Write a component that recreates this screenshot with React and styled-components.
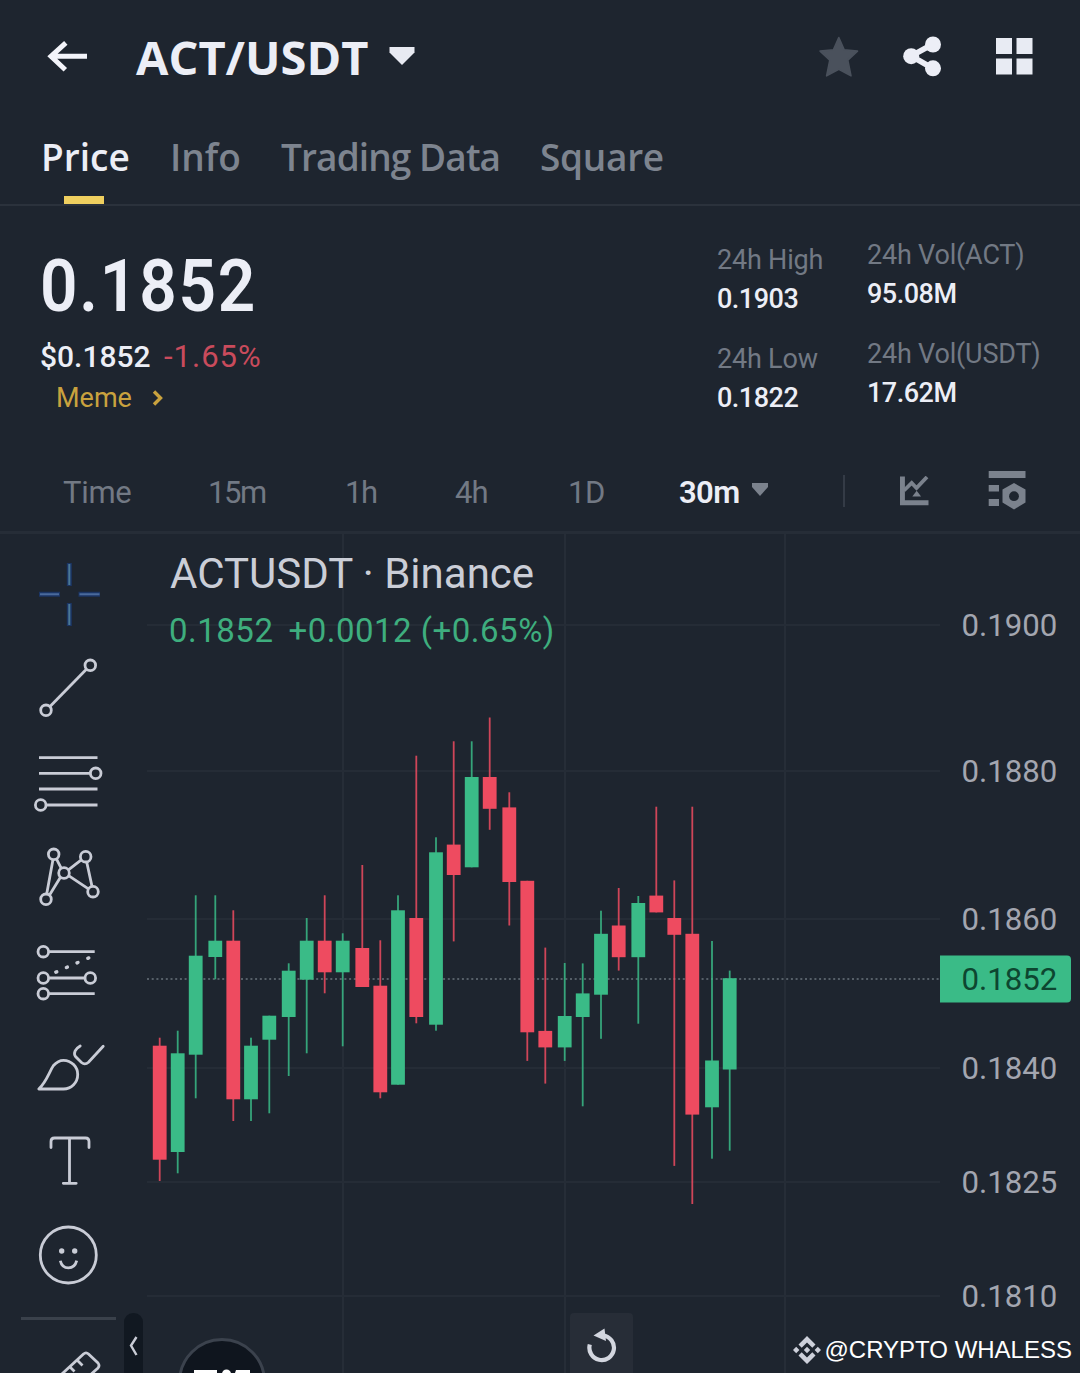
import React from 'react';
import styled, { createGlobalStyle } from 'styled-components';

const UP = '#3abb87';
const DOWN = '#ee4b60';

const TABS = [
  { label: 'Price', width: 129, active: true },
  { label: 'Info', width: 111 },
  { label: 'Trading Data', width: 259, spacing: -0.9 },
  { label: 'Square', width: 130, spacing: -0.3 },
];

const STATS = [
  [
    { label: '24h High', value: '0.1903' },
    { label: '24h Low', value: '0.1822' },
  ],
  [
    { label: '24h Vol(ACT)', value: '95.08M' },
    { label: '24h Vol(USDT)', value: '17.62M' },
  ],
];

const INTERVALS = [
  { label: 'Time', width: 145, spacing: -0.3 },
  { label: '15m', width: 137, spacing: -1.4 },
  { label: '1h', width: 110, spacing: -1.5 },
  { label: '4h', width: 113, spacing: -1 },
  { label: '1D', width: 111, spacing: -0.5 },
];

const GRID_X = [343, 565, 785];

const LEVELS = [
  { price: '0.1900', y: 625 },
  { price: '0.1880', y: 771 },
  { price: '0.1860', y: 919 },
  { price: '0.1840', y: 1068 },
  { price: '0.1825', y: 1182 },
  { price: '0.1810', y: 1296 },
];

// [x, body top, body bottom, wick top, wick bottom, is up]
const CANDLES = [
  [159.7, 1045.7, 1159.7, 1037.7, 1181, 0],
  [177.7, 1053.3, 1152, 1030.7, 1173.3, 1],
  [195.7, 955.7, 1054.7, 895.3, 1098.3, 1],
  [215.3, 940.7, 957, 895.3, 979.3, 1],
  [233.3, 940.7, 1099.3, 910.3, 1121, 0],
  [251, 1045.7, 1099.3, 1037.7, 1121, 1],
  [269.3, 1015.7, 1039.7, 1015.7, 1113.3, 1],
  [288.7, 970.7, 1017, 963.3, 1076, 1],
  [306.7, 940.7, 979.7, 918, 1053.3, 1],
  [324.7, 940.7, 972.3, 895.3, 993.3, 0],
  [342.7, 940.7, 972.3, 933.3, 1046.3, 1],
  [362.3, 948, 987, 865, 987, 0],
  [380.3, 985.7, 1092.3, 940.3, 1098.3, 0],
  [398, 910.3, 1084.7, 895.3, 1084.7, 1],
  [416.3, 918, 1017, 755.7, 1023.3, 0],
  [436, 852.3, 1024.7, 837.3, 1030.7, 1],
  [453.7, 844.6, 875, 741.3, 941.4, 0],
  [471.7, 777, 867.3, 741.3, 867.3, 1],
  [489.7, 777, 808.8, 717.5, 829.8, 0],
  [509.3, 807.4, 882, 792.3, 925.5, 0],
  [527.3, 880.8, 1032.3, 880.8, 1060.9, 0],
  [545.3, 1030.9, 1047.4, 947.6, 1083.6, 0],
  [564.7, 1016, 1047.4, 963, 1060.9, 1],
  [582.7, 993.4, 1017, 963.4, 1106.3, 1],
  [601, 933.8, 994.7, 910.7, 1038.8, 1],
  [618.7, 925.5, 957.2, 888, 970.6, 0],
  [638.3, 903, 957.2, 896, 1023.7, 1],
  [656.3, 895.6, 912.4, 806.7, 912.4, 0],
  [674.3, 918, 934.8, 880.4, 1165.9, 0],
  [692.3, 933.8, 1114.6, 806.7, 1204, 0],
  [712, 1060.5, 1107.3, 941, 1158.7, 1],
  [729.7, 978.2, 1069.5, 970.6, 1150.7, 1],
];

const TOOLS = [
  {
    name: 'cross',
    icon: (
      <>
        <path
          d="M69.3 16v23M69.3 56v23M39 47.3h21M78.5 47.3h21.5"
          stroke="#1b3564"
          strokeWidth="5"
        />
        <path d="M69.3 17v21M69.3 57v21" stroke="#4a7896" strokeWidth="2" />
        <path
          d="M40 47.3h19M79.5 47.3h20"
          stroke="#4a6a9c"
          strokeWidth="2"
        />
      </>
    ),
  },
  {
    name: 'trend line',
    icon: (
      <>
        <path d="M50 65.4 86.4 28.3" />
        <circle cx="90.3" cy="24.3" r="5.3" />
        <circle cx="46" cy="69.3" r="5.3" />
      </>
    ),
  },
  {
    name: 'fib retracement',
    icon: (
      <>
        <path d="M39 22.7h58.5M39 38.3h51.4M39 54h58.5M46 70h51.5" />
        <circle cx="95.7" cy="38.3" r="5.3" />
        <circle cx="40.7" cy="70" r="5.3" />
      </>
    ),
  },
  {
    name: 'pattern',
    icon: (
      <>
        <path d="M53 30.6 46.7 65M56.4 29.9l4.9 9.5M68.4 40.8l12.9-9.9M86.7 33l5.3 24.4M68.6 46.7l19.8 13.2M60.6 48.1 49.4 66.2" />
        <circle cx="53.7" cy="25.3" r="5.3" />
        <circle cx="85.7" cy="27.7" r="5.3" />
        <circle cx="64" cy="44" r="5.3" />
        <circle cx="93" cy="62.7" r="5.3" />
        <circle cx="46" cy="70.3" r="5.3" />
      </>
    ),
  },
  {
    name: 'forecast',
    icon: (
      <>
        <path d="M48.6 28.7h46.1M48.6 55H85M48.6 70.7h46.1" />
        <path
          d="m55.8 49.2 1-.4M66.4 44.5l1-.4M77 39.9l1-.4M87.8 35.3l1-.4"
          strokeWidth="3.4"
          strokeLinecap="round"
        />
        <circle cx="43.3" cy="28.7" r="5.3" />
        <circle cx="43.3" cy="55" r="5.3" />
        <circle cx="90.3" cy="55" r="5.3" />
        <circle cx="43.3" cy="70.7" r="5.3" />
      </>
    ),
  },
  {
    name: 'brush',
    icon: (
      <>
        <path
          d="M38.8 72C47 64 49 55 53.5 48.5C57 44.5 60 43.3 63.5 43.3C71.5 43.3 77.7 50 77.7 57.5C77.7 65.5 71.5 72 63.5 72Z"
          strokeLinejoin="round"
        />
        <path
          d="M80.2 28.9C75.5 31.5 73 36 75.5 39.5L81.5 45.5C84 47.6 86.5 47 88.5 45.2L103.2 29.2"
          strokeLinecap="round"
        />
      </>
    ),
  },
  {
    name: 'text',
    icon: (
      <path
        d="M51 36.5V30.5Q51 27 54.5 27H85.5Q89 27 89 30.5V36.5M69.5 27V72.3M63.3 72.3H76.2"
        strokeLinecap="round"
      />
    ),
  },
  {
    name: 'emoji',
    icon: (
      <>
        <circle cx="68.3" cy="50" r="28" />
        <circle cx="61.7" cy="46" r="2.7" fill="#c9ccd6" stroke="none" />
        <circle cx="74.7" cy="46" r="2.7" fill="#c9ccd6" stroke="none" />
        <path d="M60.3 55.7C62.5 65.3 74.3 65.3 76.7 55.7" />
      </>
    ),
  },
];

export default function App() {
  return (
    <Screen>
      <GlobalStyle />
      <Header>
        <BackButton aria-label="back">
          <svg width="42" height="34" viewBox="46 39 42 34">
            <path
              d="M87 56.3H51M65.8 42.8 51 56.3l14.3 13.5"
              fill="none"
              stroke="#f3f4fa"
              strokeWidth="5"
            />
          </svg>
        </BackButton>
        <Pair>ACT/USDT</Pair>
        <svg width="26" height="20" viewBox="0 0 26 20">
          <path d="M.5 1h25v5.5L13 19 .5 6.5z" fill="#e8eaf2" />
        </svg>
        <HeaderActions>
          <svg width="40" height="42" viewBox="819 36 40 42">
            <path
              d="m838.8 38.5 5.4 12.2 13.3 1.4-9.7 9 3.2 15.7-12.2-6.4-12.2 6.4 3.2-15.7-9.7-9 13.3-1.4z"
              fill="#4a515c"
              stroke="#4a515c"
              strokeWidth="1.6"
              strokeLinejoin="round"
            />
          </svg>
          <svg width="40" height="42" viewBox="902 35 40 42">
            <path
              d="M933 44 911.2 56 933 68.5"
              fill="none"
              stroke="#eceef6"
              strokeWidth="5.6"
            />
            <circle cx="911.2" cy="56.2" r="8" fill="#eceef6" />
            <circle cx="933" cy="44.5" r="8" fill="#eceef6" />
            <circle cx="933" cy="68.3" r="8" fill="#eceef6" />
          </svg>
          <svg width="37" height="37" viewBox="0 0 37 37">
            <path
              d="M0 0h16v16H0zM20.5 0h16v16h-16zM0 20.5h16v16H0zM20.5 20.5h16v16h-16z"
              fill="#e8ebf3"
            />
          </svg>
        </HeaderActions>
      </Header>

      <Tabs>
        {TABS.map(tab => (
          <Tab
            key={tab.label}
            $width={tab.width}
            $spacing={tab.spacing}
            $active={tab.active}
          >
            {tab.label}
          </Tab>
        ))}
      </Tabs>

      <Summary>
        <PriceBlock>
          <LastPrice>0.1852</LastPrice>
          <PriceRow>
            <FiatPrice>$0.1852</FiatPrice>
            <Change>-1.65%</Change>
          </PriceRow>
          <Category>
            Meme
            <svg width="12" height="16" viewBox="0 0 12 16">
              <path
                d="m2 1.5 6.5 6.5L2 14.5"
                fill="none"
                stroke="#c9a23e"
                strokeWidth="3.4"
              />
            </svg>
          </Category>
        </PriceBlock>
        <Stats>
          {STATS.map((column, index) => (
            <StatColumn key={index} $raised={index === 1}>
              {column.map(item => (
                <Stat key={item.label}>
                  <StatLabel>{item.label}</StatLabel>
                  <StatValue>{item.value}</StatValue>
                </Stat>
              ))}
            </StatColumn>
          ))}
        </Stats>
      </Summary>

      <Intervals>
        {INTERVALS.map(item => (
          <Interval
            key={item.label}
            $width={item.width}
            $spacing={item.spacing}
          >
            {item.label}
          </Interval>
        ))}
        <Interval $width={73} $spacing={-0.6} $active>
          30m
        </Interval>
        <IntervalArrow width="16" height="13" viewBox="0 0 16 13">
          <path d="M0 0h16v4L8 13 0 4z" fill="#7b828d" />
        </IntervalArrow>
        <Separator />
        <IntervalIcons>
          <svg width="29" height="30" viewBox="901 475 29 30">
            <path
              d="M903.4 475.5V501.8H929.5"
              fill="none"
              stroke="#7b828d"
              strokeWidth="5"
            />
            <path
              d="M905 489.5l7.7-7.5 4.8 5 10.5-11"
              fill="none"
              stroke="#7b828d"
              strokeWidth="3.8"
            />
            <path d="M917.7 489.8l4.4 5.6h-8.8z" fill="#7b828d" />
          </svg>
          <svg width="38" height="39" viewBox="989 472 38 39">
            <path
              d="M989.7 472H1026.5V479H989.7zM989.7 486H1000V492.5H989.7zM989.7 500H1000V507H989.7z"
              fill="#7b828d"
            />
            <path
              d="M1015 484l11.5 6.5v13L1015 510.5l-11.5-7v-13z"
              fill="#7b828d"
            />
            <circle cx="1015" cy="497.2" r="4.9" fill="#1e252f" />
          </svg>
        </IntervalIcons>
      </Intervals>

      <ChartArea>
        <Sidebar>
          {TOOLS.map(tool => (
            <Tool key={tool.name} viewBox="0 0 143 94" aria-label={tool.name}>
              {tool.icon}
            </Tool>
          ))}
          <SidebarRule />
          <RulerTool viewBox="0 0 143 53">
            <path d="M50 65 83.5 34Q86 31.8 88.5 34L98 43Q100 45.5 98 48L78 66" />
            <path d="M77.5 40.5l5 5M70 47l4.5 4.5" />
          </RulerTool>
          <CollapseHandle>
            <svg width="9" height="20" viewBox="0 0 9 20">
              <path
                d="M7.5 1 2 9.5 7.5 19"
                fill="none"
                stroke="#c9ccd6"
                strokeWidth="2.4"
              />
            </svg>
          </CollapseHandle>
        </Sidebar>
        <ChartPane>
          <ChartSvg viewBox="143 534 937 839">
            {GRID_X.map(x => (
              <path key={x} d={`M${x} 534V1373`} stroke="#262d37" strokeWidth="2" />
            ))}
            {LEVELS.map(level => (
              <path
                key={level.price}
                d={`M147 ${level.y}H940`}
                stroke="#252c36"
                strokeWidth="2"
              />
            ))}
            <path
              d="M147 979H940"
              stroke="#69737c"
              strokeWidth="1.6"
              strokeDasharray="2 2.7"
            />
            {CANDLES.map(([x, top, bottom, high, low, up]) => (
              <g key={x} fill={up ? UP : DOWN}>
                <rect
                  x={x - 0.9}
                  y={high}
                  width="1.8"
                  height={low - high}
                  opacity="0.85"
                />
                <rect x={x - 6.9} y={top} width="13.8" height={bottom - top} />
              </g>
            ))}
            {LEVELS.map(level => (
              <AxisText key={level.price} x="961.5" y={level.y + 11}>
                {level.price}
              </AxisText>
            ))}
            <path
              d="M940 955.5h127q4 0 4 4v39q0 4-4 4H940z"
              fill={UP}
            />
            <AxisText x="961.5" y="990" $last>
              0.1852
            </AxisText>
            <circle
              cx="222"
              cy="1382"
              r="42.5"
              fill="#0f151e"
              stroke="#3b424d"
              strokeWidth="3"
            />
            <path
              d="M194 1370h23v3h-23zM236 1370h14v3h-15z"
              fill="#fff"
            />
            <circle cx="226.5" cy="1374" r="4.5" fill="#fff" />
          </ChartSvg>
          <Legend>
            <LegendTitle>ACTUSDT · Binance</LegendTitle>
            <LegendValues>
              <span>0.1852</span>
              <span>+0.0012 (+0.65%)</span>
            </LegendValues>
          </Legend>
          <ResetButton aria-label="reset">
            <svg width="32" height="36" viewBox="585 1327 32 36">
              <path
                d="M588.8 1344.5A12.3 12.3 0 1 0 602 1335.5"
                fill="none"
                stroke="#d3d6df"
                strokeWidth="4.2"
              />
              <path d="M592.5 1335.5 603.5 1328.5l1.5 12.5z" fill="#d3d6df" />
            </svg>
          </ResetButton>
          <Watermark>
            <svg width="28" height="28" viewBox="0 0 28 28" fill="#cdd0da">
              <path d="M14 0l8.5 8.5-3.2 3.2L14 6.4l-5.3 5.3-3.2-3.2zM14 28l-8.5-8.5 3.2-3.2 5.3 5.3 5.3-5.3 3.2 3.2zM3.2 10.8 6.4 14l-3.2 3.2L0 14zM24.8 10.8 28 14l-3.2 3.2L21.6 14zM14 10.8l3.2 3.2-3.2 3.2-3.2-3.2z" />
            </svg>
            @CRYPTO WHALESS
          </Watermark>
        </ChartPane>
      </ChartArea>
    </Screen>
  );
}

const GlobalStyle = createGlobalStyle`
  * {
    box-sizing: border-box;
  }
  body {
    margin: 0;
    background: #1e252f;
  }
  svg {
    display: block;
    flex: none;
  }
  button {
    border: 0;
    padding: 0;
    background: none;
  }
`;

const Screen = styled.div`
  display: flex;
  flex-direction: column;
  width: 1080px;
  height: 1373px;
  overflow: hidden;
  background: #1e252f;
  color: #eceef6;
  font-family: Roboto, sans-serif;
  white-space: nowrap;
`;

const Header = styled.header`
  display: flex;
  align-items: center;
  height: 113px;
  padding: 0 47px 1px 46px;
`;

const BackButton = styled.button`
  width: 90px;
`;

const Pair = styled.h1`
  width: 253px;
  margin: 2px 0 0;
  font-family: 'Open Sans', sans-serif;
  font-size: 47px;
  font-weight: 700;
`;

const HeaderActions = styled.div`
  display: flex;
  align-items: center;
  gap: 43px;
  margin-left: auto;

  svg:last-child {
    margin-left: 11px;
  }
`;

const Tabs = styled.nav`
  display: flex;
  height: 93px;
  padding-left: 41px;
  border-bottom: 2px solid #2b323c;
`;

const Tab = styled.div`
  position: relative;
  width: ${({ $width }) => $width}px;
  color: ${({ $active }) => ($active ? '#eceef6' : '#7d848f')};
  font-family: 'Open Sans', sans-serif;
  font-size: 37px;
  font-weight: 600;
  line-height: 87px;
  letter-spacing: ${({ $spacing = 0 }) => $spacing}px;

  &::after {
    content: '';
    display: ${({ $active }) => ($active ? 'block' : 'none')};
    position: absolute;
    left: 23px;
    bottom: 0;
    width: 40px;
    height: 8px;
    background: #efcf5f;
  }
`;

const Summary = styled.section`
  display: flex;
  justify-content: space-between;
  height: 244px;
  padding: 30px 0 0 40px;
`;

const PriceBlock = styled.div`
  display: flex;
  flex-direction: column;
`;

const LastPrice = styled.div`
  height: 100px;
  font-size: 73px;
  font-weight: 600;
  line-height: 101px;
  letter-spacing: 2px;
  transform: scaleX(0.9);
  transform-origin: left;
`;

const PriceRow = styled.div`
  display: flex;
  gap: 15px;
  font-size: 30px;
  line-height: 41px;
`;

const FiatPrice = styled.span`
  width: 109px;
  font-weight: 500;
`;

const Change = styled.span`
  color: #c94b5c;
  font-size: 31px;
  letter-spacing: 1px;
`;

const Category = styled.div`
  display: flex;
  align-items: center;
  gap: 20px;
  padding-left: 16px;
  color: #c9a23e;
  font-size: 27px;
  line-height: 42px;
`;

const Stats = styled.div`
  display: flex;
`;

const StatColumn = styled.div`
  display: flex;
  flex-direction: column;
  gap: 21px;
  width: ${({ $raised }) => ($raised ? 213 : 150)}px;
  padding-top: ${({ $raised }) => ($raised ? 0 : 5)}px;
`;

const Stat = styled.div`
  display: flex;
  flex-direction: column;
  font-size: 27px;
  line-height: 39px;
`;

const StatLabel = styled.span`
  color: #727984;
  letter-spacing: -0.2px;
`;

const StatValue = styled.span`
  font-weight: 500;
  letter-spacing: -0.5px;
`;

const Intervals = styled.div`
  display: flex;
  align-items: center;
  height: 84px;
  padding-left: 63px;
  border-bottom: 3px solid #262d37;
`;

const Interval = styled.div`
  width: ${({ $width }) => $width}px;
  padding-top: 3px;
  color: ${({ $active }) => ($active ? '#eceef6' : '#727984')};
  font-size: 31px;
  font-weight: ${({ $active }) => ($active ? 600 : 400)};
  letter-spacing: ${({ $spacing = 0 }) => $spacing}px;
`;

const IntervalArrow = styled.svg`
  margin-bottom: 2px;
`;

const Separator = styled.i`
  width: 2px;
  height: 32px;
  margin-left: 75px;
  background: #343b46;
`;

const IntervalIcons = styled.div`
  display: flex;
  align-items: center;
  gap: 59px;
  margin-left: 55px;
`;

const ChartArea = styled.main`
  display: flex;
  height: 839px;
`;

const Sidebar = styled.aside`
  position: relative;
  display: flex;
  flex-direction: column;
  width: 143px;
  padding-top: 13px;
`;

const Tool = styled.svg`
  width: 143px;
  height: 94px;
  fill: none;
  stroke: #c9ccd6;
  stroke-width: 2.8px;
`;

const SidebarRule = styled.div`
  width: 95px;
  height: 3px;
  margin: 18px 0 0 21px;
  background: #3a414b;
`;

const RulerTool = styled(Tool)`
  height: 53px;
`;

// sits over the edge of the toolbar
const CollapseHandle = styled.button`
  position: absolute;
  right: 0;
  bottom: 0;
  display: flex;
  justify-content: center;
  width: 19px;
  height: 60px;
  padding-top: 23px;
  border-radius: 9px 9px 0 0;
  background: #111821;
`;

const ChartPane = styled.div`
  position: relative;
  width: 937px;
`;

const ChartSvg = styled.svg`
  width: 937px;
  height: 839px;
`;

const AxisText = styled.text`
  fill: ${({ $last }) => ($last ? '#0d4630' : '#a3a6b0')};
  font-size: 31.2px;
`;

const Legend = styled.div`
  position: absolute;
  top: 15px;
  left: 26px;
`;

const LegendTitle = styled.div`
  margin-left: 1px;
  color: #cbced7;
  font-size: 42px;
  line-height: 50px;
`;

const LegendValues = styled.div`
  display: flex;
  gap: 15px;
  margin-top: 11px;
  color: #3eae7e;
  font-size: 33px;
  line-height: 42px;
  letter-spacing: 0.5px;
`;

const ResetButton = styled.button`
  position: absolute;
  left: 427px;
  bottom: 0;
  display: flex;
  justify-content: center;
  width: 63px;
  height: 60px;
  padding-top: 14px;
  border-radius: 4px 4px 0 0;
  background: #272d37;
`;

const Watermark = styled.div`
  position: absolute;
  right: 8px;
  bottom: 9px;
  display: flex;
  align-items: center;
  gap: 3px;
  color: #fff;
  font-family: 'Liberation Sans', Arial, sans-serif;
  font-size: 24px;
  line-height: 28px;
`;
